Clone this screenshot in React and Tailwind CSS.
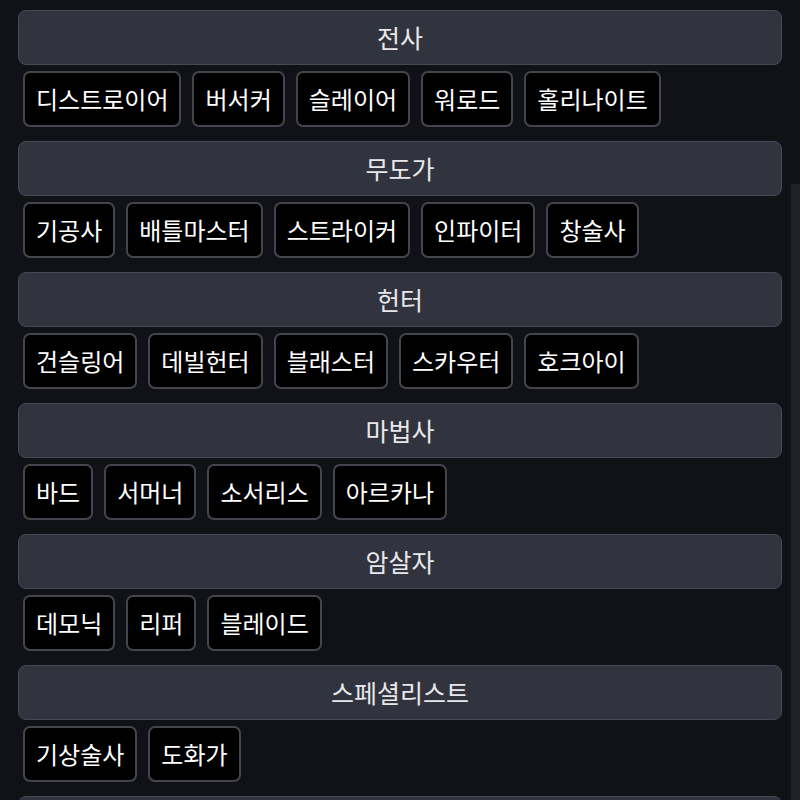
const groups = [
  { name: "전사", items: ["디스트로이어", "버서커", "슬레이어", "워로드", "홀리나이트"] },
  { name: "무도가", items: ["기공사", "배틀마스터", "스트라이커", "인파이터", "창술사"] },
  { name: "헌터", items: ["건슬링어", "데빌헌터", "블래스터", "스카우터", "호크아이"] },
  { name: "마법사", items: ["바드", "서머너", "소서리스", "아르카나"] },
  { name: "암살자", items: ["데모닉", "리퍼", "블레이드"] },
  { name: "스페셜리스트", items: ["기상술사", "도화가"] },
  { name: "", items: [] },
];

export default function App() {
  return (
    <div
      className="relative h-[800px] overflow-hidden bg-[#111217] px-[18px] pt-[10px]"
      style={{ fontFamily: '"Noto Sans CJK KR", "Noto Sans", sans-serif' }}
    >
      <div className="flex flex-col gap-[14px]">
        {groups.map((g, i) => (
          <div key={i} className="flex flex-col gap-[6px]">
            <div className="flex h-[55px] items-center justify-center rounded-lg border border-[#474a55] bg-[#31343e] text-[25px] text-[#e8e8ea]">
              {g.name}
            </div>
            {g.items.length > 0 && (
              <div className="flex gap-[11px] pl-[5px]">
                {g.items.map((it) => (
                  <div
                    key={it}
                    className="flex h-[56px] items-center rounded-[7px] border-2 border-[#45464d] bg-black px-[11px] text-[24px] text-white"
                  >
                    {it}
                  </div>
                ))}
              </div>
            )}
          </div>
        ))}
      </div>
      <div className="absolute right-0 top-[184px] h-[616px] w-[9px] bg-[#202127]" />
    </div>
  );
}
